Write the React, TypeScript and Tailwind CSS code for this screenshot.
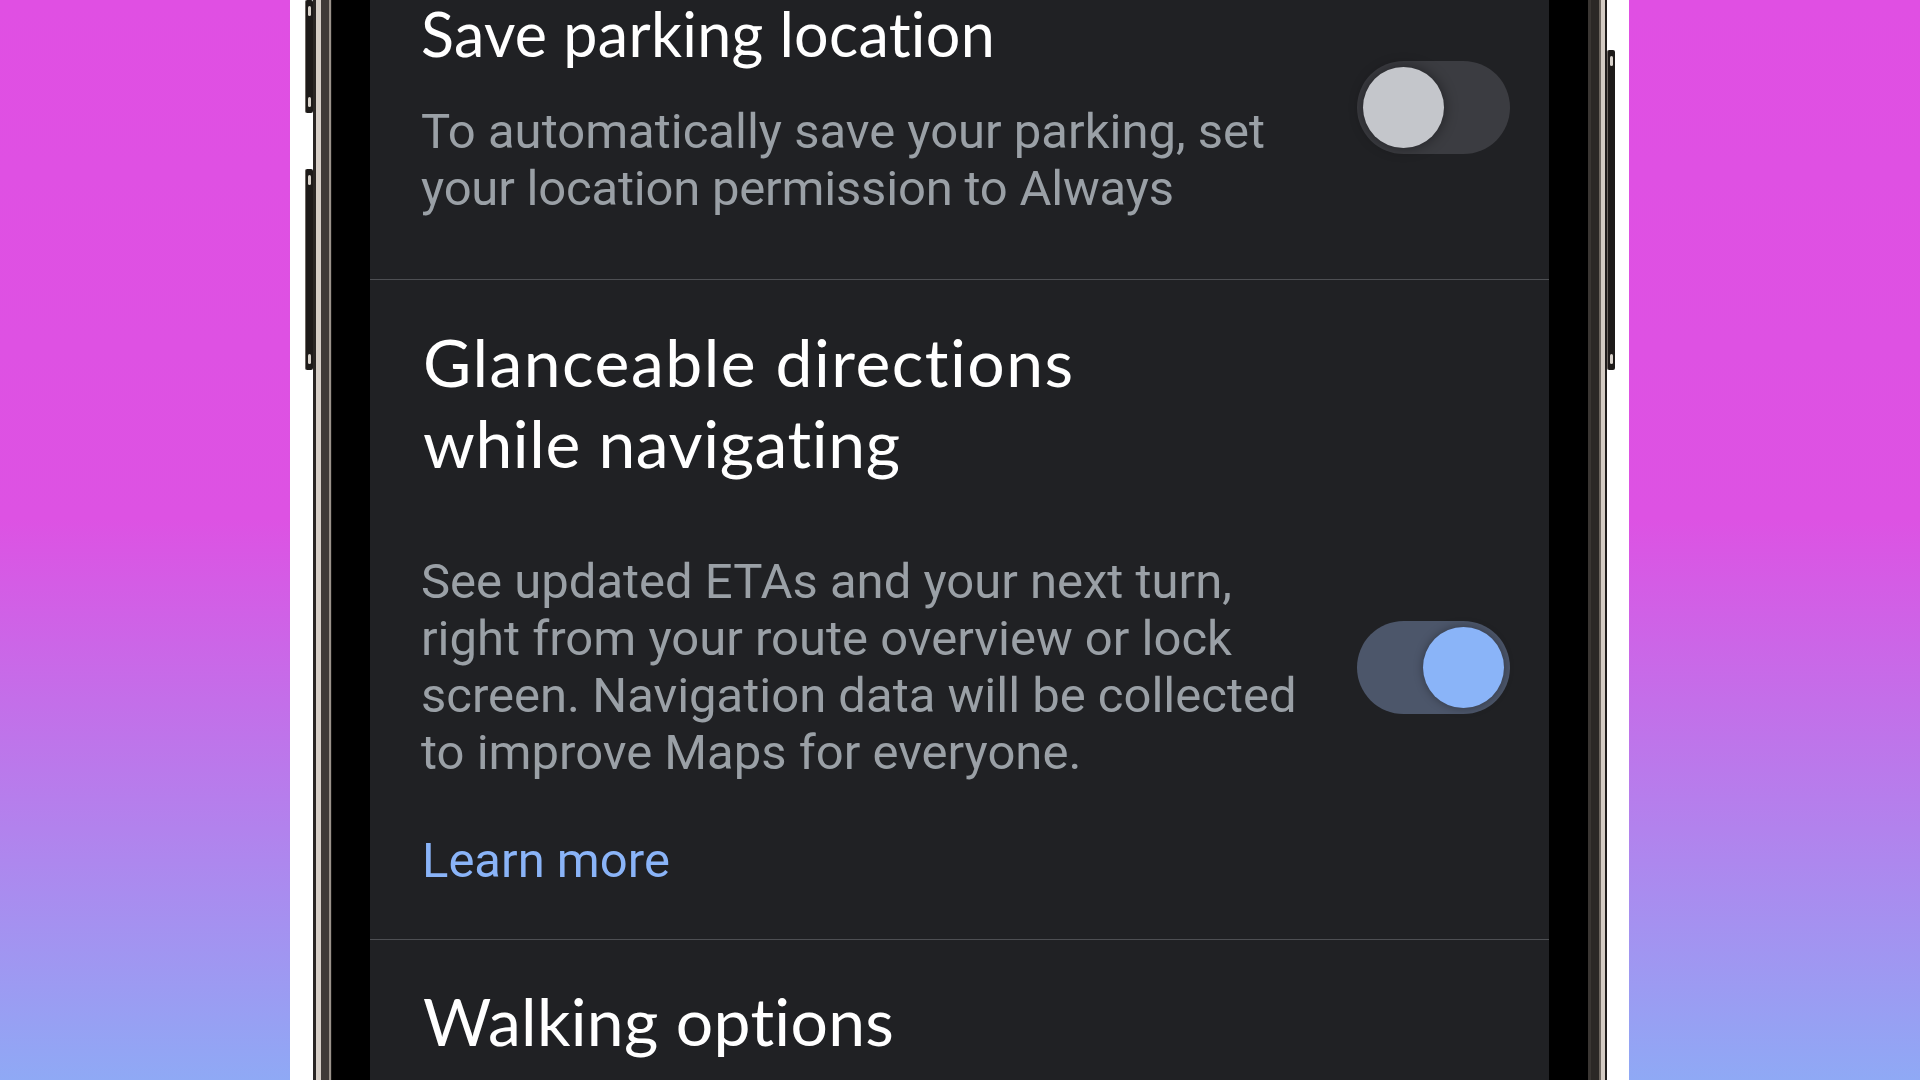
import React from "react";

const titleFont = { fontFamily: "Lato, 'Noto Sans', sans-serif" };
const bodyFont = { fontFamily: "Roboto, 'Liberation Sans', sans-serif" };

function Toggle({ on, className = "" }: { on: boolean; className?: string }) {
  return (
    <div
      className={
        (on
          ? "w-[153px] h-[93px] shrink-0 rounded-full bg-[#4c566a] flex items-center justify-end px-[6px] "
          : "w-[153px] h-[93px] shrink-0 rounded-full bg-[#3b3c41] flex items-center justify-start px-[6px] ") + className
      }
    >
      <div
        className={
          on
            ? "w-[81px] h-[81px] rounded-full bg-[#8ab4f8] shadow-[0_0_10px_rgba(0,0,0,0.35)]"
            : "w-[81px] h-[81px] rounded-full bg-[#c4c6cb] shadow-[0_0_14px_rgba(0,0,0,0.45)]"
        }
      />
    </div>
  );
}

function SideButton({ className }: { className: string }) {
  // side key of the phone: dark body with a light edge
  return (
    <div className={"absolute w-[8px] rounded-[2px] bg-[#1d1a19] border-l border-[#6b6560] " + className}>
      <div className="absolute left-[2px] top-[6px] w-[3px] h-[10px] rounded-full bg-[#d9d2cb]" />
      <div className="absolute left-[2px] bottom-[6px] w-[3px] h-[10px] rounded-full bg-[#d9d2cb]" />
    </div>
  );
}

export default function App() {
  return (
    <div className="w-[1920px] h-[1080px] overflow-hidden flex bg-[linear-gradient(to_bottom,#e04fe3_0%,#dd52e3_48%,#8fa9f5_100%)]">
      <div className="w-[290px] shrink-0" />

      {/* left edge of the phone */}
      <div className="relative w-[23px] shrink-0 bg-white">
        <SideButton className="right-0 top-0 h-[113px]" />
        <SideButton className="right-0 top-[169px] h-[201px]" />
      </div>
      <div className="w-[19px] shrink-0 flex">
        <div className="w-[3px] bg-[#2a2624]" />
        <div className="w-[5px] bg-[#d6cec6]" />
        <div className="w-[8px] bg-[#3f3a37]" />
        <div className="w-[2px] bg-[#9a928a]" />
        <div className="w-[1px] bg-[#1a1817]" />
      </div>
      <div className="w-[38px] shrink-0 bg-black" />

      {/* screen */}
      <div className="w-[1179px] shrink-0 bg-[#202124] flex flex-col">
        <div className="flex items-center pl-[51px] pr-[39px] pt-[2px] pb-[62px] border-b border-[#4d4f53]">
          <div className="flex-1 flex flex-col">
            <div className="text-[61px] leading-[64px] tracking-[0.3px] text-white whitespace-nowrap" style={titleFont}>
              Save parking location
            </div>
            <div className="mt-[37px] text-[49px] leading-[57px] text-[#9aa0a6] whitespace-nowrap" style={bodyFont}>
              To automatically save your parking, set
              <br />
              <span className="tracking-[-0.2px]">your location permission to Always</span>
            </div>
          </div>
          <Toggle on={false} className="mb-[4px]" />
        </div>

        <div className="flex flex-col pl-[51px] pr-[39px] pt-[41px] pb-[50px] border-b border-[#4d4f53]">
          <div className="ml-[2px] text-[66px] leading-[81px] text-white whitespace-nowrap" style={titleFont}>
            <span className="tracking-[1.5px]">Glanceable directions</span>
            <br />
            <span className="tracking-[0.6px]">while navigating</span>
          </div>
          <div className="mt-[70px] flex items-center">
            <div className="flex-1 text-[49px] leading-[57px] text-[#9aa0a6] whitespace-nowrap" style={bodyFont}>
              See updated ETAs and your next turn,
              <br />
              right from your route overview or lock
              <br />
              screen. Navigation data will be collected
              <br />
              to improve Maps for everyone.
            </div>
            <Toggle on={true} />
          </div>
          <div className="mt-[51px] ml-[1px] text-[49px] leading-[57px] text-[#8ab4f8]" style={bodyFont}>
            Learn more
          </div>
        </div>

        <div className="pl-[53px] pt-[49px] text-[66px] leading-[64px] tracking-[0.3px] text-white whitespace-nowrap" style={titleFont}>
          Walking options
        </div>
      </div>

      {/* right edge of the phone */}
      <div className="w-[39px] shrink-0 bg-black" />
      <div className="w-[19px] shrink-0 flex">
        <div className="w-[3px] bg-[#3a3633]" />
        <div className="w-[8px] bg-[#2b2826]" />
        <div className="w-[2px] bg-[#6e6760]" />
        <div className="w-[4px] bg-[#d3cbc3]" />
        <div className="w-[2px] bg-[#1f1c1b]" />
      </div>
      <div className="relative w-[22px] shrink-0 bg-white">
        <SideButton className="left-0 top-[50px] h-[320px]" />
      </div>

      <div className="flex-1" />
    </div>
  );
}
